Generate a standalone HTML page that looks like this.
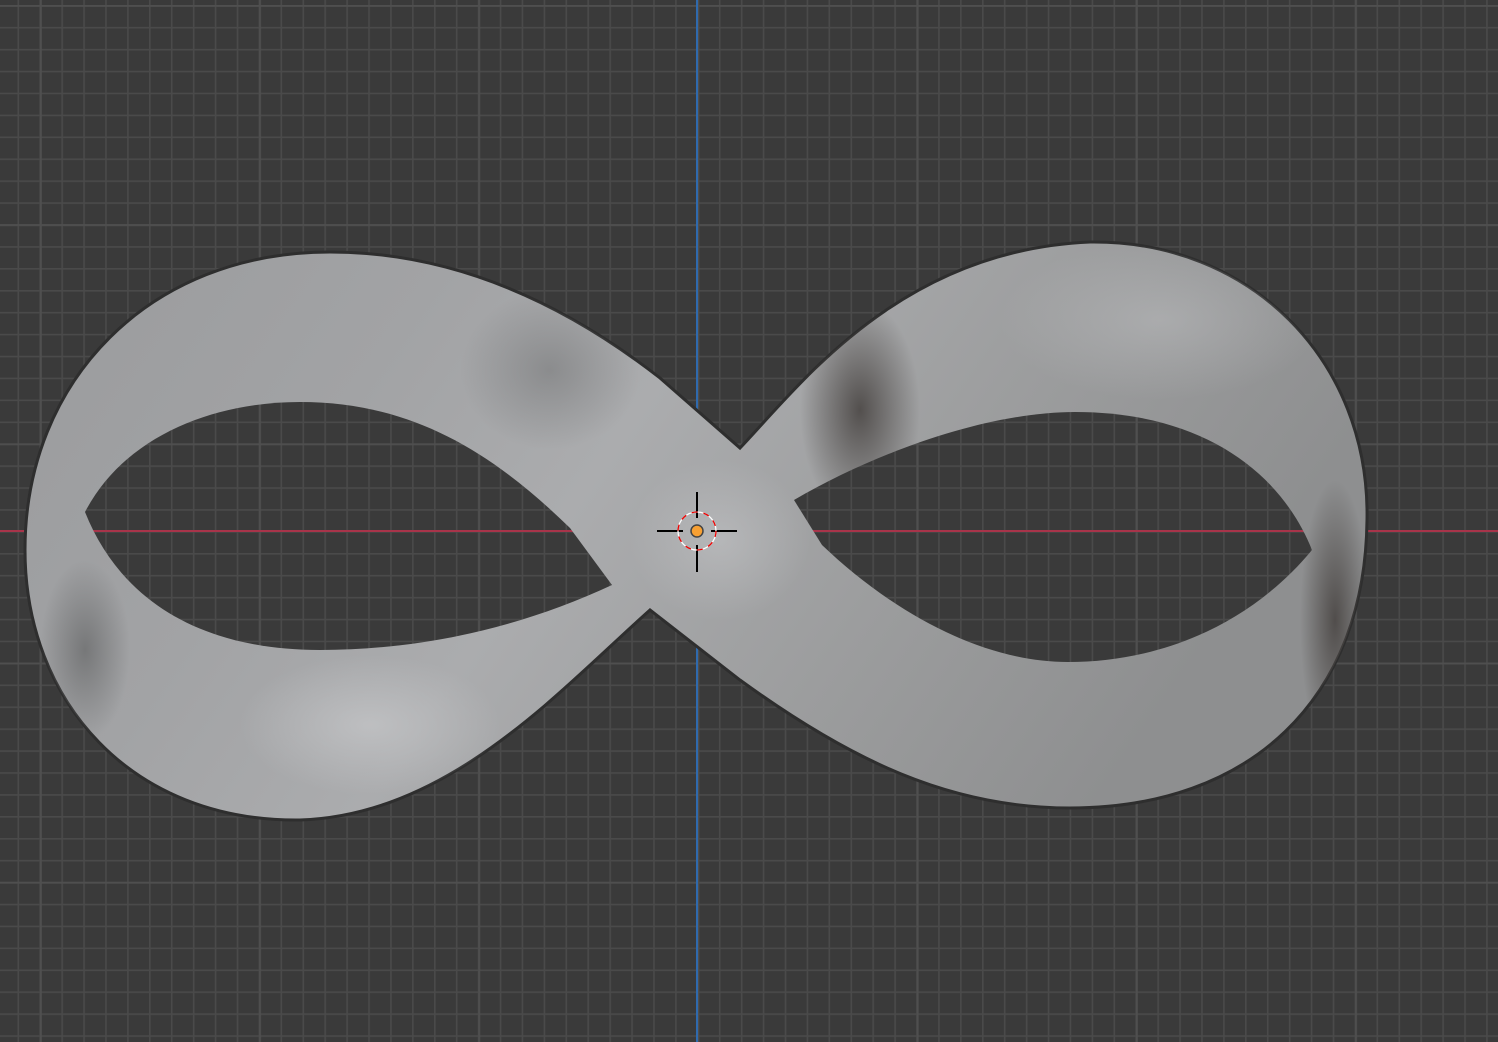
<!DOCTYPE html>
<html><head><meta charset="utf-8"><style>
html,body{margin:0;padding:0;background:#3a3a3a;overflow:hidden}
svg{display:block}
</style></head><body>
<svg width="1498" height="1042" viewBox="0 0 1498 1042" xmlns="http://www.w3.org/2000/svg">
<defs>
<pattern id="g" x="17.5" y="5" width="21.92" height="21.92" patternUnits="userSpaceOnUse">
<rect width="21.92" height="21.92" fill="#3a3a3a"/>
<rect x="0" y="0" width="1.6" height="21.92" fill="#4a4a4a"/>
<rect x="0" y="0" width="21.92" height="1.6" fill="#4a4a4a"/>
</pattern>
<pattern id="G" x="40" y="5" width="219.2" height="219.2" patternUnits="userSpaceOnUse">
<rect x="0" y="0" width="1.8" height="219.2" fill="#4f4f4f"/>
<rect x="0" y="0" width="219.2" height="1.8" fill="#4f4f4f"/>
</pattern>
<linearGradient id="body" x1="0" y1="0" x2="1" y2="0.3">
<stop offset="0" stop-color="#9a9b9d"/>
<stop offset="0.3" stop-color="#a2a3a5"/>
<stop offset="0.5" stop-color="#abacae"/>
<stop offset="0.75" stop-color="#9c9d9e"/>
<stop offset="1" stop-color="#8e8f90"/>
</linearGradient>
<radialGradient id="dk"><stop offset="0" stop-color="#4a4644" stop-opacity="0.9"/><stop offset="1" stop-color="#4a4644" stop-opacity="0"/></radialGradient>
<radialGradient id="md"><stop offset="0" stop-color="#6c6d6e" stop-opacity="0.8"/><stop offset="1" stop-color="#6c6d6e" stop-opacity="0"/></radialGradient>
<radialGradient id="lt"><stop offset="0" stop-color="#c0c1c3" stop-opacity="0.9"/><stop offset="1" stop-color="#c0c1c3" stop-opacity="0"/></radialGradient>
<mask id="holes">
<rect width="1498" height="1042" fill="#fff"/>
<path d="M85 512 C125 435 215 402 300 402 C410 402 490 450 570 528 L612 585 C520 628 420 650 320 650 C200 650 120 600 85 512 Z" fill="#000"/>
<path d="M794 500 C880 450 990 412 1075 412 C1200 412 1280 470 1312 550 C1250 625 1160 662 1068 662 C980 662 890 610 822 545 Z" fill="#000"/>
</mask>
<clipPath id="sil"><path d="M330 252 C450 252 560 300 660 378 L740 448 C800 385 900 250 1090 242 C1250 240 1370 360 1367 520 C1365 700 1250 808 1070 808 C950 808 850 760 740 680 L650 610 C560 690 450 815 300 820 C130 822 25 700 25 550 C25 380 150 252 330 252 Z"/></clipPath>
</defs>
<rect width="1498" height="1042" fill="url(#g)"/>
<rect width="1498" height="1042" fill="url(#G)"/>
<rect x="0" y="530" width="1498" height="2" fill="#a8344a"/>
<rect x="696" y="0" width="2" height="1042" fill="#2f6aae"/>
<g mask="url(#holes)">
<path d="M330 252 C450 252 560 300 660 378 L740 448 C800 385 900 250 1090 242 C1250 240 1370 360 1367 520 C1365 700 1250 808 1070 808 C950 808 850 760 740 680 L650 610 C560 690 450 815 300 820 C130 822 25 700 25 550 C25 380 150 252 330 252 Z" fill="url(#body)" stroke="#2e2e2e" stroke-width="3"/>
<g clip-path="url(#sil)">
<ellipse cx="860" cy="410" rx="60" ry="110" fill="url(#dk)"/>
<ellipse cx="1335" cy="620" rx="35" ry="140" fill="url(#dk)"/>
<ellipse cx="85" cy="650" rx="45" ry="90" fill="url(#md)"/>
<ellipse cx="370" cy="725" rx="130" ry="70" fill="url(#lt)"/>
<ellipse cx="1160" cy="320" rx="160" ry="80" fill="url(#lt)" opacity="0.5"/>
<ellipse cx="550" cy="370" rx="90" ry="80" fill="url(#md)" opacity="0.6"/>
<ellipse cx="720" cy="540" rx="90" ry="80" fill="url(#lt)" opacity="0.7"/>
</g>
</g>
<g>
<line x1="697" y1="492" x2="697" y2="518" stroke="#000" stroke-width="2"/>
<line x1="697" y1="545" x2="697" y2="572" stroke="#000" stroke-width="2"/>
<line x1="657" y1="531" x2="683" y2="531" stroke="#000" stroke-width="2"/>
<line x1="711" y1="531" x2="737" y2="531" stroke="#000" stroke-width="2"/>
<circle cx="697" cy="531" r="19" fill="none" stroke="#fff" stroke-width="1.3"/>
<circle cx="697" cy="531" r="19" fill="none" stroke="#e00" stroke-width="1.3" stroke-dasharray="6 6"/>
<circle cx="697" cy="531" r="6" fill="#f7a033" stroke="#444" stroke-width="1.5"/>
</g>
</svg>
</body></html>
